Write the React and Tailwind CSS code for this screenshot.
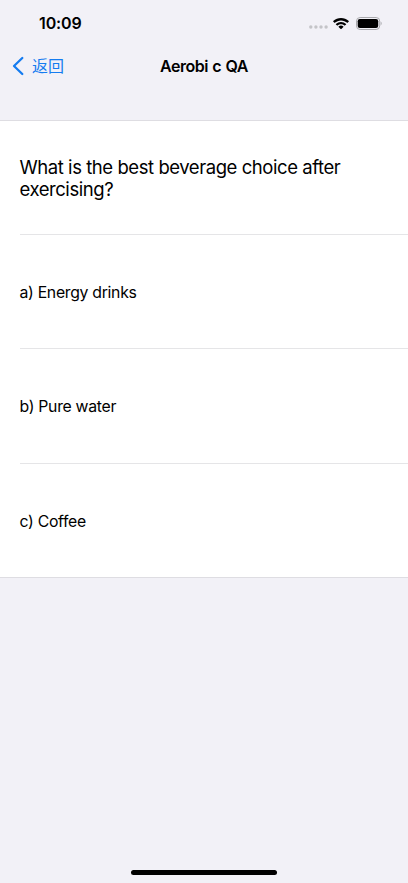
const answers = ['a) Energy drinks', 'b) Pure water', 'c) Coffee'];

function StatusBar() {
  return (
    <div className="flex h-[47px] shrink-0 items-center justify-between pl-[39px] pr-[26px]">
      <span className="-mt-px whitespace-nowrap text-[16px] font-semibold leading-5 tracking-[-0.1px]">10:09</span>
      <div className="flex items-center">
        <svg className="mr-[5px] mt-[7px] h-[4px] w-[19px]" viewBox="0 0 19 4" fill="#c4c4c8">
          <circle cx="1.800" cy="2" r="1.700" />
          <circle cx="6.900" cy="2" r="1.700" />
          <circle cx="12" cy="2" r="1.700" />
          <circle cx="17.100" cy="2" r="1.700" />
        </svg>
        <svg className="mr-[6px] h-[12px] w-[17px]" viewBox="0.500 0 17 12" preserveAspectRatio="none">
          <path d="M8.5 2.4c2.4 0 4.6.9 6.2 2.4.1.1.3.1.4 0l1.2-1.2c.1-.1.1-.3 0-.5C12-1 5-1 .7 3.1c-.1.2-.1.4 0 .5l1.2 1.2c.1.1.3.1.4 0C3.9 3.300 6.100 2.400 8.500 2.400Z" />
          <path d="M8.500 6.300c1.300 0 2.500.5 3.400 1.300.1.1.3.1.5 0l1.200-1.200c.1-.1.1-.3 0-.5-2.900-2.700-7.300-2.700-10.200 0-.1.2-.1.4 0 .5l1.200 1.200c.2.1.4.1.5 0 .9-.8 2.100-1.300 3.400-1.300Z" />
          <path d="M10.900 9c.1-.1.1-.3 0-.5-1.400-1.200-3.400-1.200-4.800 0-.1.2-.1.4 0 .5l2.100 2.100c.2.1.4.1.6 0Z" />
        </svg>
        <svg className="h-[13px] w-[26px]" viewBox="0.300 0 26 13">
          <rect x="0.800" y="0.500" width="23.200" height="12" rx="3.600" fill="none" stroke="#a9a9ad" />
          <rect x="2" y="2" width="20.500" height="9" rx="2.200" />
          <path d="M25 4.600c1.300.8 1.300 3 0 3.800Z" fill="#a9a9ad" />
        </svg>
      </div>
    </div>
  );
}

function NavigationBar() {
  return (
    <div className="grid h-[38px] shrink-0 grid-cols-[1fr_auto_1fr] items-center">
      <button className="flex items-center pl-[12px] text-[#157cf0]">
        <svg className="h-[20px] w-[12px]" viewBox="0 0 12 20" fill="none" stroke="currentColor" strokeWidth="2.300" strokeLinecap="round" strokeLinejoin="round">
          <path d="M10.300 2 2 10l8.300 8" />
        </svg>
        <span className="-mt-[2px] ml-[8px] whitespace-nowrap font-['Noto_Sans_CJK_SC',sans-serif] text-[16px] leading-5">返回</span>
      </button>
      <h1 className="whitespace-nowrap text-[16px] font-semibold leading-5 tracking-[-0.45px] [word-spacing:0.7px]">Aerobi c QA</h1>
      <span />
    </div>
  );
}

export default function App() {
  return (
    <div className="flex h-[883px] w-[408px] flex-col overflow-hidden bg-[#f2f1f7] font-['Inter',sans-serif] text-black">
      <StatusBar />
      <NavigationBar />
      <main className="mt-[35px] h-[458px] shrink-0 border-y border-[#dedde2] bg-white pl-[20px]">
        <h2 className="-ml-[0.500px] flex h-[114px] items-center border-b border-[#e5e5e7] text-[18.500px] font-normal leading-[22.500px] tracking-[-0.440px]">
          <span className="mt-px">What is the best beverage choice after<br />exercising?</span>
        </h2>
        {answers.map((answer) => (
          <div key={answer} className="-ml-[0.500px] flex h-[114.330px] items-center border-b border-[#e5e5e7] pt-[2px] text-[15.800px] leading-5 tracking-[-0.300px] last:border-b-0">
            {answer}
          </div>
        ))}
      </main>
      <div className="mx-auto mb-[8px] mt-auto h-[5px] w-[146px] rounded-full bg-black" />
    </div>
  );
}
